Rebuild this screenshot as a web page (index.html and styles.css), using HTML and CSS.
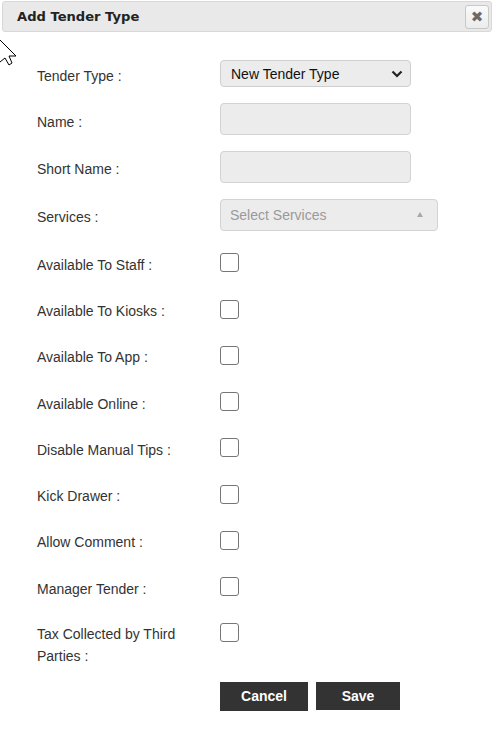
FILE: index.html
```html
<!DOCTYPE html>
<html lang="en">
<head>
    <meta charset="UTF-8">
    <meta name="viewport" content="width=device-width, initial-scale=1.0">
    <title>Add Tender Type</title>
    <link rel="stylesheet" href="styles.css">
</head>
<body>
    <div class="dialog">
        <div class="titlebar">
            <span class="title">Add Tender Type</span>
            <button class="close-btn" type="button">&#10006;</button>
        </div>

        <form class="form">
            <div class="row row-select">
                <label class="field-label">Tender Type :</label>
                <div class="select-box">
                    <span>New Tender Type</span>
                    <svg class="chevron" width="12" height="8" viewBox="0 0 12 8"><path d="M1.5 1.5 L6 6 L10.5 1.5" fill="none" stroke="#222" stroke-width="2.2"/></svg>
                </div>
            </div>
            <div class="row row-input">
                <label class="field-label">Name :</label>
                <input class="text-input" type="text">
            </div>
            <div class="row row-input">
                <label class="field-label">Short Name :</label>
                <input class="text-input" type="text">
            </div>
            <div class="row row-input">
                <label class="field-label">Services :</label>
                <div class="multi-select">
                    <span>Select Services</span>
                    <span class="caret"></span>
                </div>
            </div>
            <div class="row">
                <label class="field-label">Available To Staff :</label>
                <span class="checkbox"></span>
            </div>
            <div class="row">
                <label class="field-label">Available To Kiosks :</label>
                <span class="checkbox"></span>
            </div>
            <div class="row">
                <label class="field-label">Available To App :</label>
                <span class="checkbox"></span>
            </div>
            <div class="row">
                <label class="field-label">Available Online :</label>
                <span class="checkbox"></span>
            </div>
            <div class="row">
                <label class="field-label">Disable Manual Tips :</label>
                <span class="checkbox"></span>
            </div>
            <div class="row">
                <label class="field-label">Kick Drawer :</label>
                <span class="checkbox"></span>
            </div>
            <div class="row">
                <label class="field-label">Allow Comment :</label>
                <span class="checkbox"></span>
            </div>
            <div class="row">
                <label class="field-label">Manager Tender :</label>
                <span class="checkbox"></span>
            </div>
            <div class="row row-wrap">
                <label class="field-label">Tax Collected by Third Parties :</label>
                <span class="checkbox"></span>
            </div>

            <div class="actions">
                <button class="btn btn-cancel" type="button">Cancel</button>
                <button class="btn btn-save" type="button">Save</button>
            </div>
        </form>
    </div>

    <!-- mouse pointer left in the screenshot -->
    <svg class="cursor" width="20" height="30" viewBox="0 0 20 30">
        <path d="M-3 0 L16 19 L9 19 L12 26 L9 28 L5 21 L0 25" fill="#fff" stroke="#000" stroke-width="1"/>
    </svg>
</body>
</html>
```

FILE: styles.css
```css
* {
    margin: 0;
    padding: 0;
    box-sizing: border-box;
}

body {
    background-color: #fff;
    font-family: "Liberation Sans", Arial, sans-serif;
    color: #333;
    width: 493px;
    height: 736px;
    overflow: hidden;
    position: relative;
}

.dialog {
    padding: 1px 1px 0 2px;
}

.titlebar {
    height: 31px;
    background-color: #e9e9e9;
    border: 1px solid #d8d8d8;
    border-radius: 3px;
    display: flex;
    align-items: center;
    justify-content: space-between;
    padding: 0 2px 0 14px;
}

.title {
    font-family: "DejaVu Sans", Verdana, sans-serif;
    font-size: 13.1px;
    font-weight: bold;
    color: #222;
}

.close-btn {
    width: 24px;
    height: 24px;
    border: 1px solid #c8c8c8;
    border-radius: 3px;
    background: linear-gradient(#fafafa, #ececec);
    color: #6a6a6a;
    font-size: 15px;
    line-height: 22px;
    text-align: center;
    font-family: "DejaVu Sans", sans-serif;
}

.form {
    padding: 28px 0 0 35px;
}

.row {
    display: flex;
    align-items: center;
    height: 32px;
    margin-bottom: 14.25px;
}

.row-select {
    height: 27px;
    margin-bottom: 16px;
}

.row-input {
    margin-bottom: 15.8px;
}

.field-label {
    width: 183px;
    flex-shrink: 0;
    font-size: 14px;
    line-height: 22px;
    padding-top: 5px;
    color: #333;
}

.select-box {
    width: 191px;
    height: 27px;
    border: 1px solid #cfcfcf;
    border-radius: 4px;
    background-color: #ececec;
    display: flex;
    align-items: center;
    justify-content: space-between;
    padding: 0 7px 0 10px;
    font-size: 14px;
    color: #111;
}

.chevron {
    margin-top: 1px;
}

.text-input {
    width: 191px;
    height: 32px;
    border: 1px solid #d3d3d3;
    border-radius: 4px;
    background-color: #ececec;
}

.multi-select {
    width: 218px;
    height: 32px;
    border: 1px solid #d3d3d3;
    border-radius: 4px;
    background-color: #ececec;
    display: flex;
    align-items: center;
    justify-content: space-between;
    padding: 0 14px 0 9px;
    font-size: 14px;
    color: #9a9a9a;
}

.caret {
    width: 0;
    height: 0;
    border-left: 3.5px solid transparent;
    border-right: 3.5px solid transparent;
    border-bottom: 5px solid #a8a8a8;
}

.checkbox {
    width: 19px;
    height: 19px;
    border: 1.5px solid #767676;
    border-radius: 3px;
    background-color: #fff;
    margin-top: 1px;
}

.row-wrap {
    height: auto;
    align-items: flex-start;
}

.row-wrap .field-label {
    width: 155px;
    margin-right: 28px;
    padding-top: 7px;
}

.row-wrap .checkbox {
    margin-top: 7px;
}

.actions {
    display: flex;
    gap: 8px;
    padding-left: 183px;
}

.btn {
    height: 29px;
    border: none;
    background-color: #333;
    color: #fff;
    font-size: 14px;
    font-weight: bold;
}

.btn-cancel {
    width: 88px;
}

.btn-save {
    width: 84px;
    height: 28px;
}

.cursor {
    position: absolute;
    left: 0;
    top: 37px;
}
```
